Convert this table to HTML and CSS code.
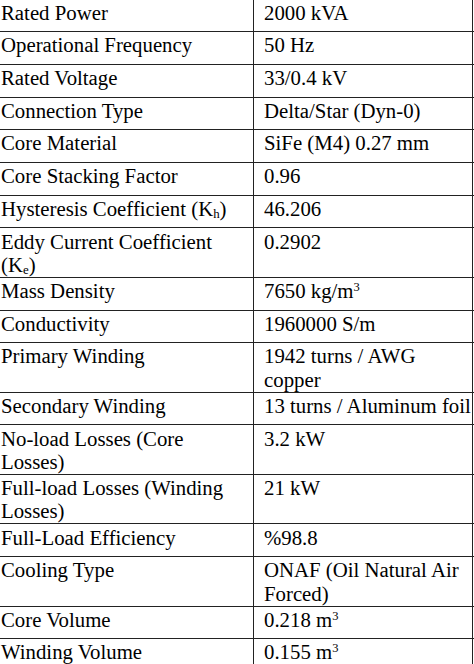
FILE: index.html
```html
<!DOCTYPE html>
<html lang="en">
<head>
<meta charset="utf-8">
<title>Transformer specifications</title>
<link rel="stylesheet" href="styles.css">
</head>
<body>
<div class="spec">
  <div class="row"><div class="k">Rated Power</div><div class="v">2000 kVA</div></div>
  <div class="row"><div class="k">Operational Frequency</div><div class="v">50 Hz</div></div>
  <div class="row"><div class="k">Rated Voltage</div><div class="v">33/0.4 kV</div></div>
  <div class="row"><div class="k">Connection Type</div><div class="v">Delta/Star (Dyn-0)</div></div>
  <div class="row"><div class="k">Core Material</div><div class="v">SiFe (M4) 0.27 mm</div></div>
  <div class="row"><div class="k">Core Stacking Factor</div><div class="v">0.96</div></div>
  <div class="row"><div class="k">Hysteresis Coefficient (K<sub>h</sub>)</div><div class="v">46.206</div></div>
  <div class="row tall"><div class="k"><span class="ln">Eddy Current Coefficient</span> <span class="ln">(K<sub>e</sub>)</span></div><div class="v">0.2902</div></div>
  <div class="row"><div class="k">Mass Density</div><div class="v">7650 kg/m<sup>3</sup></div></div>
  <div class="row"><div class="k">Conductivity</div><div class="v">1960000 S/m</div></div>
  <div class="row tall"><div class="k">Primary Winding</div><div class="v">1942 turns / AWG copper</div></div>
  <div class="row"><div class="k">Secondary Winding</div><div class="v nowrap">13 turns / Aluminum foil</div></div>
  <div class="row tall"><div class="k">No-load Losses (Core Losses)</div><div class="v">3.2 kW</div></div>
  <div class="row tall"><div class="k">Full-load Losses (Winding Losses)</div><div class="v">21 kW</div></div>
  <div class="row"><div class="k">Full-Load Efficiency</div><div class="v">%98.8</div></div>
  <div class="row tall"><div class="k">Cooling Type</div><div class="v">ONAF (Oil Natural Air Forced)</div></div>
  <div class="row"><div class="k">Core Volume</div><div class="v">0.218 m<sup>3</sup></div></div>
  <div class="row"><div class="k">Winding Volume</div><div class="v">0.155 m<sup>3</sup></div></div>
</div>
</body>
</html>
```
FILE: styles.css
```css
html, body {
  margin: 0;
  padding: 0;
  background: #ffffff;
}

body {
  font-family: "Liberation Serif", "Times New Roman", serif;
  font-size: 20.8px;
  color: #000000;
  overflow: hidden;
  height: 664px;
}

.spec {
  margin: -0.5px 0 0 -10px;
  width: 484px;
}

.row {
  display: grid;
  grid-template-columns: 264px 219px;
  height: 32.7px;
  box-sizing: border-box;
  border-bottom: 1px solid #222222;
}

.row.tall {
  height: 49.5px;
}

.k, .v {
  padding-top: 1.2px;
  line-height: 23.3px;
}

.k {
  padding-left: 11px;
  padding-right: 16px;
  border-right: 1px solid #222222;
}

.v {
  padding-left: 10px;
  border-right: 1px solid #222222;
}

.ln {
  white-space: nowrap;
}

.nowrap {
  white-space: nowrap;
}

sub {
  font-size: 0.62em;
  line-height: 0;
  vertical-align: -0.12em;
}

sup {
  font-size: 0.6em;
  line-height: 0;
  vertical-align: 0.6em;
}
```
